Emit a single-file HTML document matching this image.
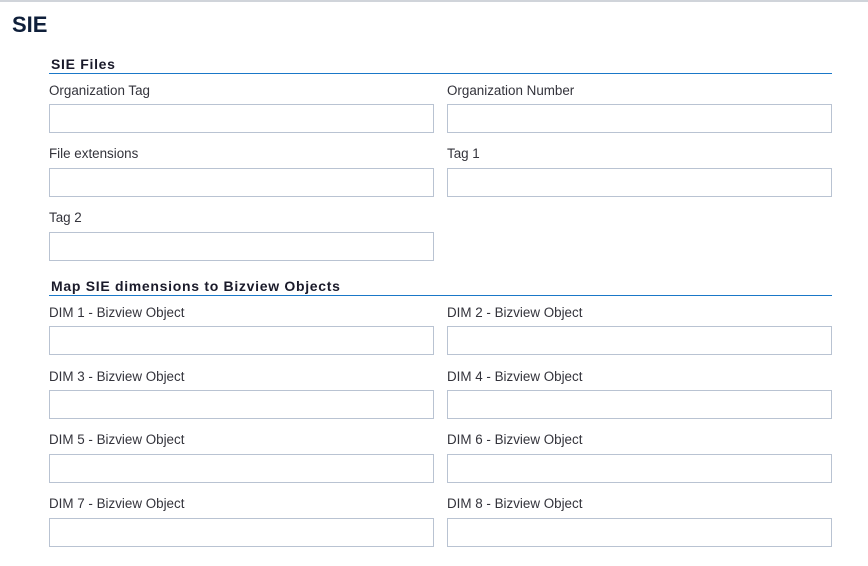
<!DOCTYPE html>
<html><head><style>
body{margin:0;width:868px;height:566px;background:#fff;font-family:"Liberation Sans",sans-serif;position:relative;overflow:hidden}
.top{position:absolute;left:0;top:0;width:868px;height:2px;background:#d0d4da}
h1{position:absolute;left:12px;top:12px;margin:0;font-size:22px;font-weight:bold;color:#0f1f3a}
.sec{position:absolute;left:49px;width:783px;height:18px;border-bottom:1px solid #1a78c8;font-size:14px;font-weight:bold;color:#1a1a2a;padding-left:2px;box-sizing:border-box;letter-spacing:0.7px}
.lbl{position:absolute;font-size:13.4px;color:#33333b}
.in{position:absolute;width:385px;height:29px;border:1px solid #b9c3d2;box-sizing:border-box;background:#fff}
</style></head><body>
<div class="top"></div>
<h1>SIE</h1>
<div class="sec" style="top:56px">SIE Files</div>
<div class="lbl" style="left:49px;top:83px">Organization Tag</div>
<div class="lbl" style="left:447px;top:83px">Organization Number</div>
<div class="in" style="left:49px;top:104px"></div>
<div class="in" style="left:447px;top:104px"></div>
<div class="lbl" style="left:49px;top:146px">File extensions</div>
<div class="lbl" style="left:447px;top:146px">Tag 1</div>
<div class="in" style="left:49px;top:168px"></div>
<div class="in" style="left:447px;top:168px"></div>
<div class="lbl" style="left:49px;top:210px">Tag 2</div>
<div class="in" style="left:49px;top:232px"></div>
<div class="sec" style="top:278px">Map SIE dimensions to Bizview Objects</div>
<div class="lbl" style="left:49px;top:305px">DIM 1 - Bizview Object</div>
<div class="lbl" style="left:447px;top:305px">DIM 2 - Bizview Object</div>
<div class="in" style="left:49px;top:326px"></div>
<div class="in" style="left:447px;top:326px"></div>
<div class="lbl" style="left:49px;top:369px">DIM 3 - Bizview Object</div>
<div class="lbl" style="left:447px;top:369px">DIM 4 - Bizview Object</div>
<div class="in" style="left:49px;top:390px"></div>
<div class="in" style="left:447px;top:390px"></div>
<div class="lbl" style="left:49px;top:432px">DIM 5 - Bizview Object</div>
<div class="lbl" style="left:447px;top:432px">DIM 6 - Bizview Object</div>
<div class="in" style="left:49px;top:454px"></div>
<div class="in" style="left:447px;top:454px"></div>
<div class="lbl" style="left:49px;top:496px">DIM 7 - Bizview Object</div>
<div class="lbl" style="left:447px;top:496px">DIM 8 - Bizview Object</div>
<div class="in" style="left:49px;top:518px"></div>
<div class="in" style="left:447px;top:518px"></div>
</body></html>
